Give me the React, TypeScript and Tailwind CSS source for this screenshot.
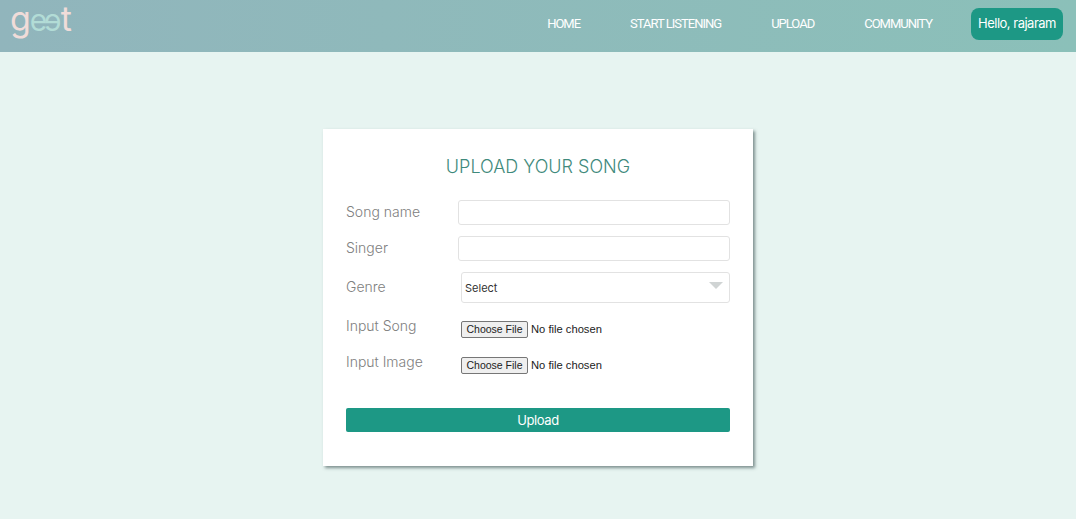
import { useState } from 'react'

const navItems = ['HOME', 'START LISTENING', 'UPLOAD', 'COMMUNITY']

function Logo() {
  return (
    <div className="-mt-[6px] flex items-baseline leading-none text-[#f0dcd9] font-['Inter',sans-serif]">
      <span className="text-[34px]">g</span>
      <span className="-ml-[1px] text-[30px] text-[#b2dcd6]">e</span>
      <span className="-ml-[3px] -scale-x-100 text-[30px] text-[#b2dcd6]">e</span>
      <span className="-ml-[1px] text-[34px]">t</span>
    </div>
  )
}

function Field({ label }: { label: string }) {
  return (
    <div className="flex items-center">
      <label className="w-[112px] pb-[2px] text-[14px] font-light text-[#808080]">{label}</label>
      <input
        type="text"
        className="h-[25px] w-[272px] rounded-[3px] border border-[#e2e2e2] bg-white"
      />
    </div>
  )
}

function FileField({ label }: { label: string }) {
  return (
    <div className="flex h-[17px] items-start">
      <label className="-mt-[6px] w-[115px] text-[14px] font-light text-[#808080]">{label}</label>
      <input
        type="file"
        className="w-[200px] text-[11.2px] text-[#222] font-['Liberation_Sans',sans-serif] file:mr-[3px] file:h-[17px] file:w-[67px] file:rounded-[2px] file:border file:border-[#767676] file:bg-[#efefef] file:p-0 file:text-[10.5px] file:text-[#222]"
      />
    </div>
  )
}

export default function App() {
  const [genre, setGenre] = useState('Select')

  return (
    <div className="flex min-h-[519px] flex-col bg-[#e7f4f1] font-['Inter',sans-serif]">
      <header className="flex h-[52px] items-start justify-between bg-gradient-to-r from-[#91b5bc] to-[#8bc0b9] pt-[8px] pr-[13px] pl-[10px]">
        <Logo />
        <nav className="flex items-center text-[13px] tracking-[-1px] text-white font-['Roboto',sans-serif]">
          {navItems.map((item) => (
            <a key={item} href="#" className="mr-[50px] last-of-type:mr-[39px]">
              {item}
            </a>
          ))}
          <button className="h-[32px] w-[92px] rounded-[8px] bg-[#1d9885] font-['Inter',sans-serif] text-[13px] tracking-[-0.5px] text-white">
            Hello, rajaram
          </button>
        </nav>
      </header>

      <main className="flex justify-center pt-[77px]">
        <form className="flex h-[337px] w-[430px] flex-col bg-white px-[23px] shadow-[2px_2px_3px_rgba(90,110,110,0.75)]">
          <h1 className="mt-[25px] text-center text-[18px] leading-[26px] font-light text-[#3f8a7c]">
            UPLOAD YOUR SONG
          </h1>
          <div className="mt-[20px] flex flex-col gap-[11px]">
            <Field label="Song name" />
            <Field label="Singer" />
          </div>
          <div className="mt-[11px] flex items-center">
            <label className="w-[115px] pb-[2px] text-[14px] font-light text-[#808080]">Genre</label>
            <div className="relative">
              <select
                value={genre}
                onChange={(e) => setGenre(e.target.value)}
                className="h-[31px] w-[269px] appearance-none rounded-[3px] border border-[#e2e2e2] bg-white pt-[1px] pl-[3px] text-[11px] text-[#333]"
              >
                <option>Select</option>
                <option>Pop</option>
                <option>Rock</option>
              </select>
              <span className="absolute top-[10px] right-[7px] h-0 w-0 border-x-[7px] border-t-[7px] border-x-transparent border-t-[#d0d4d4]" />
            </div>
          </div>
          <div className="mt-[18px] flex flex-col gap-[19px]">
            <FileField label="Input Song" />
            <FileField label="Input Image" />
          </div>
          <button
            type="button"
            className="mt-[34px] h-[24px] w-full rounded-[2px] bg-[#1d9885] pt-[1px] text-[13px] tracking-[-0.4px] text-white"
          >
            Upload
          </button>
        </form>
      </main>
    </div>
  )
}
